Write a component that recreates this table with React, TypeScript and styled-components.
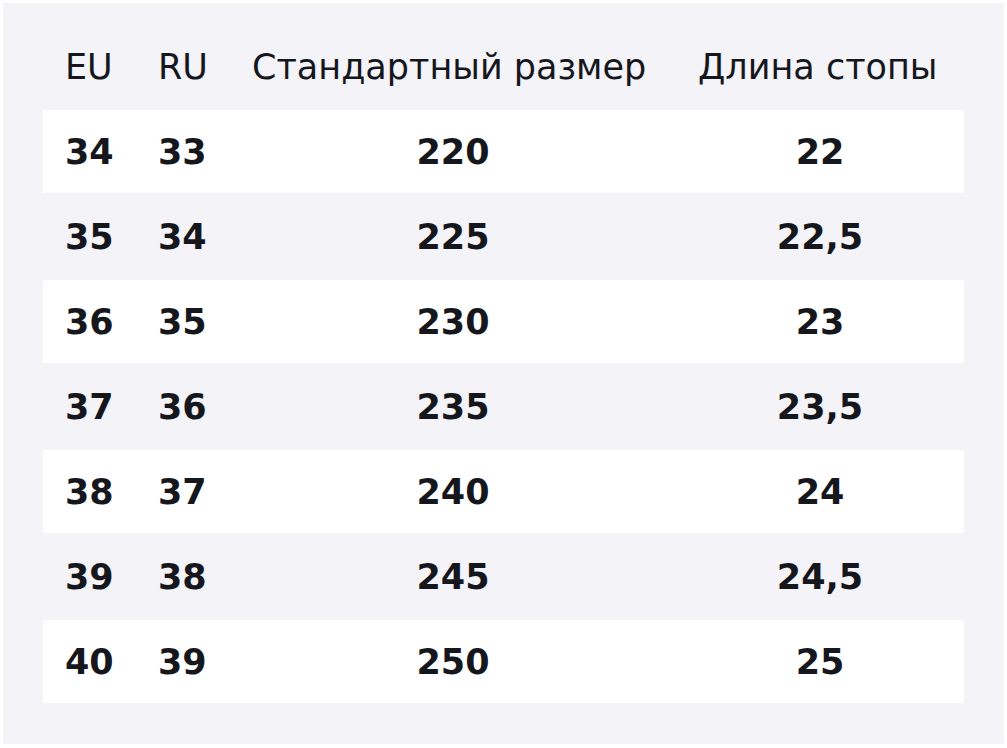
import React from "react";
import styled, { createGlobalStyle } from "styled-components";

const GlobalStyle = createGlobalStyle`
  html, body {
    margin: 0;
    padding: 0;
    background: #ffffff;
  }
  body {
    padding: 3px;
    font-family: "DejaVu Sans", "Liberation Sans", sans-serif;
    color: #16171d;
  }
`;

const Panel = styled.div`
  background: #f3f3f8;
  padding: 21px 40px 40px;
`;

const Table = styled.div`
  display: grid;
  grid-template-columns: 93px 94px minmax(0, 1fr) 288px;
`;

const Row = styled.div<{ $white?: boolean }>`
  display: contents;

  & > * {
    background: ${(p) => (p.$white ? "#ffffff" : "transparent")};
  }
`;

const Cell = styled.div<{ $center?: boolean; $head?: boolean }>`
  height: 85px;
  box-sizing: border-box;
  border-top: 1px solid transparent;
  border-bottom: 1px solid transparent;
  background-clip: padding-box !important;
  padding: 0 22px;
  display: flex;
  align-items: center;
  justify-content: ${(p) => (p.$center ? "center" : "flex-start")};
  font-size: 35px;
  font-weight: ${(p) => (p.$head ? 400 : 700)};
  white-space: nowrap;
`;

const sizes: [string, string, string, string][] = [
  ["34", "33", "220", "22"],
  ["35", "34", "225", "22,5"],
  ["36", "35", "230", "23"],
  ["37", "36", "235", "23,5"],
  ["38", "37", "240", "24"],
  ["39", "38", "245", "24,5"],
  ["40", "39", "250", "25"],
];

const headers = ["EU", "RU", "Стандартный размер", "Длина стопы"];

export default function App() {
  return (
    <>
      <GlobalStyle />
      <Panel>
        <Table>
          <Row>
            {headers.map((h) => (
              <Cell key={h} $head>
                {h}
              </Cell>
            ))}
          </Row>
          {sizes.map((row, i) => (
            <Row key={row[0]} $white={i % 2 === 0}>
              <Cell>{row[0]}</Cell>
              <Cell>{row[1]}</Cell>
              <Cell $center>{row[2]}</Cell>
              <Cell $center>{row[3]}</Cell>
            </Row>
          ))}
        </Table>
      </Panel>
    </>
  );
}
